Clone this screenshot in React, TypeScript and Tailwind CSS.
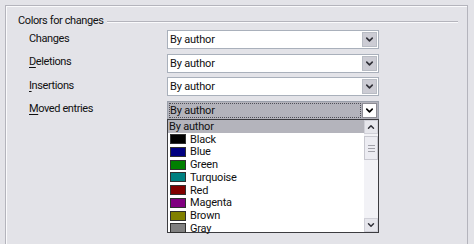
import { ChevronDown, ChevronUp } from "lucide-react";

const colors = [
  { name: "Black", hex: "#000000" },
  { name: "Blue", hex: "#000080" },
  { name: "Green", hex: "#008000" },
  { name: "Turquoise", hex: "#008080" },
  { name: "Red", hex: "#800000" },
  { name: "Magenta", hex: "#800080" },
  { name: "Brown", hex: "#808000" },
  { name: "Gray", hex: "#808080" },
];

const rows = [
  { label: "Changes", key: "" },
  { label: "Deletions", key: "D" },
  { label: "Insertions", key: "I" },
  { label: "Moved entries", key: "M" },
];

function Label({ text, mnemonic }: { text: string; mnemonic: string }) {
  if (!mnemonic) return <span>{text}</span>;
  return (
    <span>
      <span className="underline underline-offset-2">{text[0]}</span>
      {text.slice(1)}
    </span>
  );
}

function Select({ active }: { active?: boolean }) {
  return (
    <div
      className={
        active
          ? "relative flex h-[19px] w-[212px] items-center border border-[#9aa0ab] bg-[#b3b3bb]"
          : "flex h-[19px] w-[212px] items-center border border-[#a9b0bb] bg-white"
      }
    >
      {active && <div className="pointer-events-none absolute inset-[1px] right-[17px] border border-dotted border-[#505058]" />}
      <span className="flex-1 pl-[2px] text-[11px] leading-none tracking-[-0.2px] text-[#101010]">By author</span>
      <div
        className={
          active
            ? "mr-[1px] flex h-[15px] w-[15px] items-center justify-center border border-[#8c8c94] bg-white"
            : "mr-[1px] flex h-[15px] w-[15px] items-center justify-center border border-[#b8bcc4] bg-[#ccccd4]"
        }
      >
        <ChevronDown size={11} strokeWidth={3.5} className={active ? "text-black" : "text-[#303038]"} />
      </div>
    </div>
  );
}

export default function App() {
  return (
    <div className="relative h-[244px] w-[474px] overflow-hidden bg-[#e3e3e8] pl-[5px] pt-[5px] font-['Roboto','Liberation_Sans',Arial,sans-serif] text-[#111]">
      <div className="h-[260px] w-[463px] border border-[#b4b4bc] shadow-[inset_1px_1px_0_#fafafc]">
        <div className="flex items-center gap-[4px] pl-[12px] pr-[9px] pt-[8px] text-[11px] leading-[14px] tracking-[-0.4px]">
          <span>Colors for changes</span>
          <div className="h-0 flex-1 border-t border-[#b4b4bc] shadow-[0_1px_0_#fafafc]" />
        </div>
        <div className="mt-[2px] flex flex-col gap-[4.5px] pl-[23px]">
          {rows.map((r, i) => (
            <div key={r.label} className="flex h-[19px] items-center">
              <div className="w-[138px] pb-[3px] text-[11px] leading-none tracking-[-0.4px]">
                <Label text={r.label} mnemonic={r.key} />
              </div>
              <Select active={i === 3} />
            </div>
          ))}
        </div>
      </div>

      <div className="absolute left-[167px] top-[119px] flex h-[114px] w-[212px] border border-[#3c3c40] bg-white">
        <div className="flex-1">
          <div className="flex h-[12.75px] items-center bg-[#b4b4bc] pl-[1px] text-[11px] leading-none tracking-[-0.2px]">By author</div>
          {colors.map((c) => (
            <div key={c.name} className="flex h-[12.75px] items-center gap-[4px] pl-[2px] text-[11px] leading-none tracking-[-0.2px]">
              <div className="h-[10px] w-[16px] shrink-0 border border-[#303030]" style={{ backgroundColor: c.hex }} />
              <span>{c.name}</span>
            </div>
          ))}
        </div>
        <div className="flex w-[14px] flex-col bg-[#f2f2f6]">
          <div className="flex h-[14px] items-center justify-center border border-[#d0d0d8] bg-[#e6e6ec]">
            <ChevronUp size={10} strokeWidth={3.5} className="text-[#303038]" />
          </div>
          <div className="mt-[2px] flex h-[24px] flex-col items-center justify-center gap-[2px] border border-[#c8c8d0] bg-[#ececf2]">
            <div className="h-0 w-[7px] border-t border-[#a0a0a8]" />
            <div className="h-0 w-[7px] border-t border-[#a0a0a8]" />
            <div className="h-0 w-[7px] border-t border-[#a0a0a8]" />
          </div>
          <div className="flex-1" />
          <div className="flex h-[14px] items-center justify-center border border-[#d0d0d8] bg-[#e6e6ec]">
            <ChevronDown size={10} strokeWidth={3.5} className="text-[#303038]" />
          </div>
        </div>
      </div>
    </div>
  );
}
